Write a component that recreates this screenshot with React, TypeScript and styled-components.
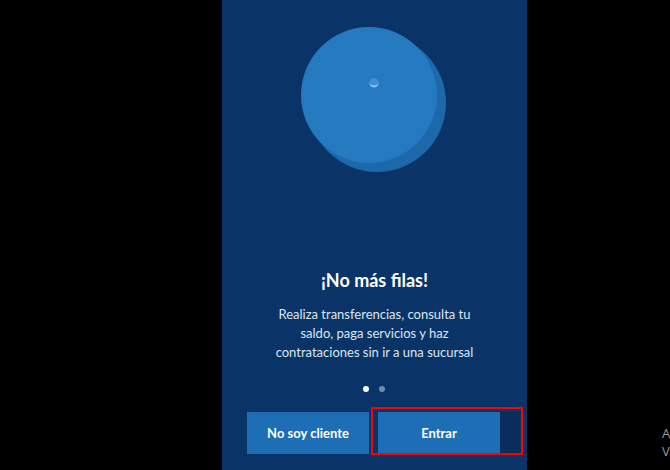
import styled, { createGlobalStyle } from 'styled-components'

const GlobalStyle = createGlobalStyle`
  html, body {
    margin: 0;
    padding: 0;
    background: #000;
    overflow: hidden;
  }
  body {
    font-family: Lato, 'Open Sans', sans-serif;
  }
`

const Illustration = () => (
  <svg width="150" height="150" viewBox="0 0 150 150">
    <circle cx="78" cy="78" r="69" fill="#1c68ab" />
    <circle cx="70" cy="70" r="68" fill="#2479bf" />
    <circle cx="75" cy="58" r="5" fill="#3f8fd2" />
    <path d="M70.5 58.5 A4.6 4.6 0 0 0 79.5 58.5 A5 3.4 0 0 1 70.5 58.5 Z" fill="#8fc8f2" />
  </svg>
)

const App = () => (
  <>
    <GlobalStyle />
    <Screen>
      <Phone>
        <Hero>
          <Illustration />
        </Hero>
        <Title>¡No más filas!</Title>
        <Description>
          Realiza transferencias, consulta tu
          <br />
          saldo, paga servicios y haz
          <br />
          contrataciones sin ir a una sucursal
        </Description>
        <Dots>
          <Dot active />
          <Dot />
        </Dots>
        <Actions>
          <ActionButton>No soy cliente</ActionButton>
          <ActionButton>Entrar</ActionButton>
          <ShadeBlock />
          <Highlight />
        </Actions>
      </Phone>
      <Watermark>
        <span>A</span>
        <span>V</span>
      </Watermark>
    </Screen>
  </>
)

export default App

const Screen = styled.div`
  position: relative;
  width: 670px;
  height: 470px;
  display: flex;
  padding-left: 222px;
  box-sizing: border-box;
  background: #000;
`

const Phone = styled.div`
  width: 305px;
  height: 470px;
  background: #0a3468;
  display: flex;
  flex-direction: column;
  align-items: center;
`

const Hero = styled.div`
  margin-top: 25px;
  margin-left: -2px;
  width: 150px;
  height: 150px;
  svg {
    display: block;
  }
`

const Title = styled.h1`
  margin: 94px 0 0;
  font-size: 18px;
  line-height: 22px;
  font-weight: 700;
  color: #fff;
  text-align: center;
`

const Description = styled.p`
  margin: 14px 0 0;
  font-size: 13px;
  line-height: 19px;
  color: #dde5ef;
  text-align: center;
`

const Dots = styled.div`
  display: flex;
  gap: 10px;
  margin-top: 24px;
  margin-left: -1px;
`

const Dot = styled.span<{ active?: boolean }>`
  width: 6px;
  height: 6px;
  border-radius: 50%;
  background: ${({ active }) => (active ? '#ffffff' : '#6c8cb4')};
`

const Actions = styled.div`
  position: relative;
  align-self: stretch;
  display: flex;
  gap: 9px;
  margin-top: 20px;
  padding-left: 25px;
`

const ActionButton = styled.button`
  width: 122px;
  height: 42px;
  border: none;
  background: #1d6eb5;
  color: #fff;
  font-family: Lato, 'Open Sans', sans-serif;
  font-size: 13px;
  font-weight: 700;
  cursor: pointer;
`

const ShadeBlock = styled.div`
  width: 21px;
  height: 42px;
  margin-left: -9px;
  background: #0b2d5c;
`

const Highlight = styled.div`
  position: absolute;
  left: 149px;
  top: -5px;
  width: 152px;
  height: 48px;
  box-sizing: border-box;
  border: 2px solid #ff0000;
  pointer-events: none;
`

const Watermark = styled.div`
  position: absolute;
  left: 662px;
  top: 424px;
  display: flex;
  flex-direction: column;
  line-height: 18px;
  font-family: 'Open Sans', sans-serif;
  font-size: 13px;
  color: #9a9a9a;
`
